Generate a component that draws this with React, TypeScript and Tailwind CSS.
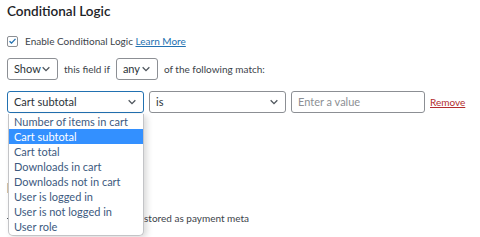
import { useState } from "react";

const options = [
  "Number of items in cart",
  "Cart subtotal",
  "Cart total",
  "Downloads in cart",
  "Downloads not in cart",
  "User is logged in",
  "User is not logged in",
  "User role",
];

function Chevron() {
  return (
    <svg width="10" height="10" viewBox="0 0 12 12" fill="none" className="shrink-0">
      <path d="M2 4l4 4 4-4" stroke="#50575e" strokeWidth="1.6" />
    </svg>
  );
}

function Select({ value, className }: { value: string; className: string }) {
  return (
    <div
      className={`flex items-center justify-between whitespace-nowrap rounded-[3px] border bg-white px-[6px] text-[11px] text-[#2c3338] ${className}`}
    >
      <span>{value}</span>
      <Chevron />
    </div>
  );
}

export default function App() {
  const [selected] = useState(1);

  return (
    <div
      className="relative h-[237px] w-[480px] overflow-hidden whitespace-nowrap bg-white text-[#3c434a]"
      style={{ fontFamily: 'Lato, "Noto Sans", sans-serif' }}
    >
      <div className="px-[7px] pt-[2px]">
        <h2 className="h-[18px] text-[13.5px] font-semibold leading-[18px] text-[#1d2327]">Conditional Logic</h2>

        {/* Enable checkbox */}
        <label className="mt-[15px] flex h-[12px] items-center gap-[7px] text-[10px] leading-[12px]">
          <span className="flex h-[11px] w-[11px] items-center justify-center rounded-[2px] border border-[#8c8f94] bg-white">
            <svg width="10" height="10" viewBox="0 0 12 12" fill="none">
              <path d="M2 6.2l2.7 2.6L10 3.2" stroke="#2271b1" strokeWidth="1.8" />
            </svg>
          </span>
          <span>
            Enable Conditional Logic{" "}
            <a href="#" className="text-[#2271b1] underline">
              Learn More
            </a>
          </span>
        </label>

        {/* Show / any row */}
        <div className="mt-[11px] flex items-center gap-[6px] text-[10px]">
          <Select value="Show" className="h-[22px] w-[51px] border-[#8c8f94]" />
          <span>this field if</span>
          <Select value="any" className="h-[22px] w-[42px] border-[#8c8f94]" />
          <span>of the following match:</span>
        </div>

        {/* Rule row */}
        <div className="mt-[11px] flex items-center gap-[5px]">
          <Select value="Cart subtotal" className="h-[22px] w-[137px] border-[#2271b1]" />
          <Select value="is" className="h-[22px] w-[137px] border-[#8c8f94]" />
          <div className="flex h-[22px] w-[134px] items-center rounded-[3px] border border-[#8c8f94] px-[6px] text-[11px] text-[#8c8f94]">
            Enter a value
          </div>
          <a href="#" className="text-[10px] text-[#b32d2e] underline">
            Remove
          </a>
        </div>

        {/* Content behind dropdown */}
        <div className="mt-[70px] flex h-[10px] items-center">
          <span className="h-[10px] w-[3px] bg-[#d8c3a5]" />
        </div>
        <div className="mt-[19px] flex h-[12px] items-center text-[10px]">
          <span className="h-[1px] w-[3px] shrink-0 bg-[#50575e]" />
          <span className="w-[134px] shrink-0" />
          <span>stored as payment meta</span>
        </div>
      </div>

      {/* Open dropdown */}
      <ul className="absolute left-[8px] top-[114px] w-[136px] rounded-b-[5px] border border-t-0 border-[#c3c4c7] bg-white pb-[1px] text-[11px] text-[#3d5a80] shadow-[3px_2px_6px_rgba(0,0,0,0.15)]">
        {options.map((o, i) => (
          <li
            key={o}
            className={`h-[15px] px-[5px] leading-[15px] ${i === selected ? "bg-[#3390ff] text-white" : ""}`}
          >
            {o}
          </li>
        ))}
      </ul>
    </div>
  );
}
